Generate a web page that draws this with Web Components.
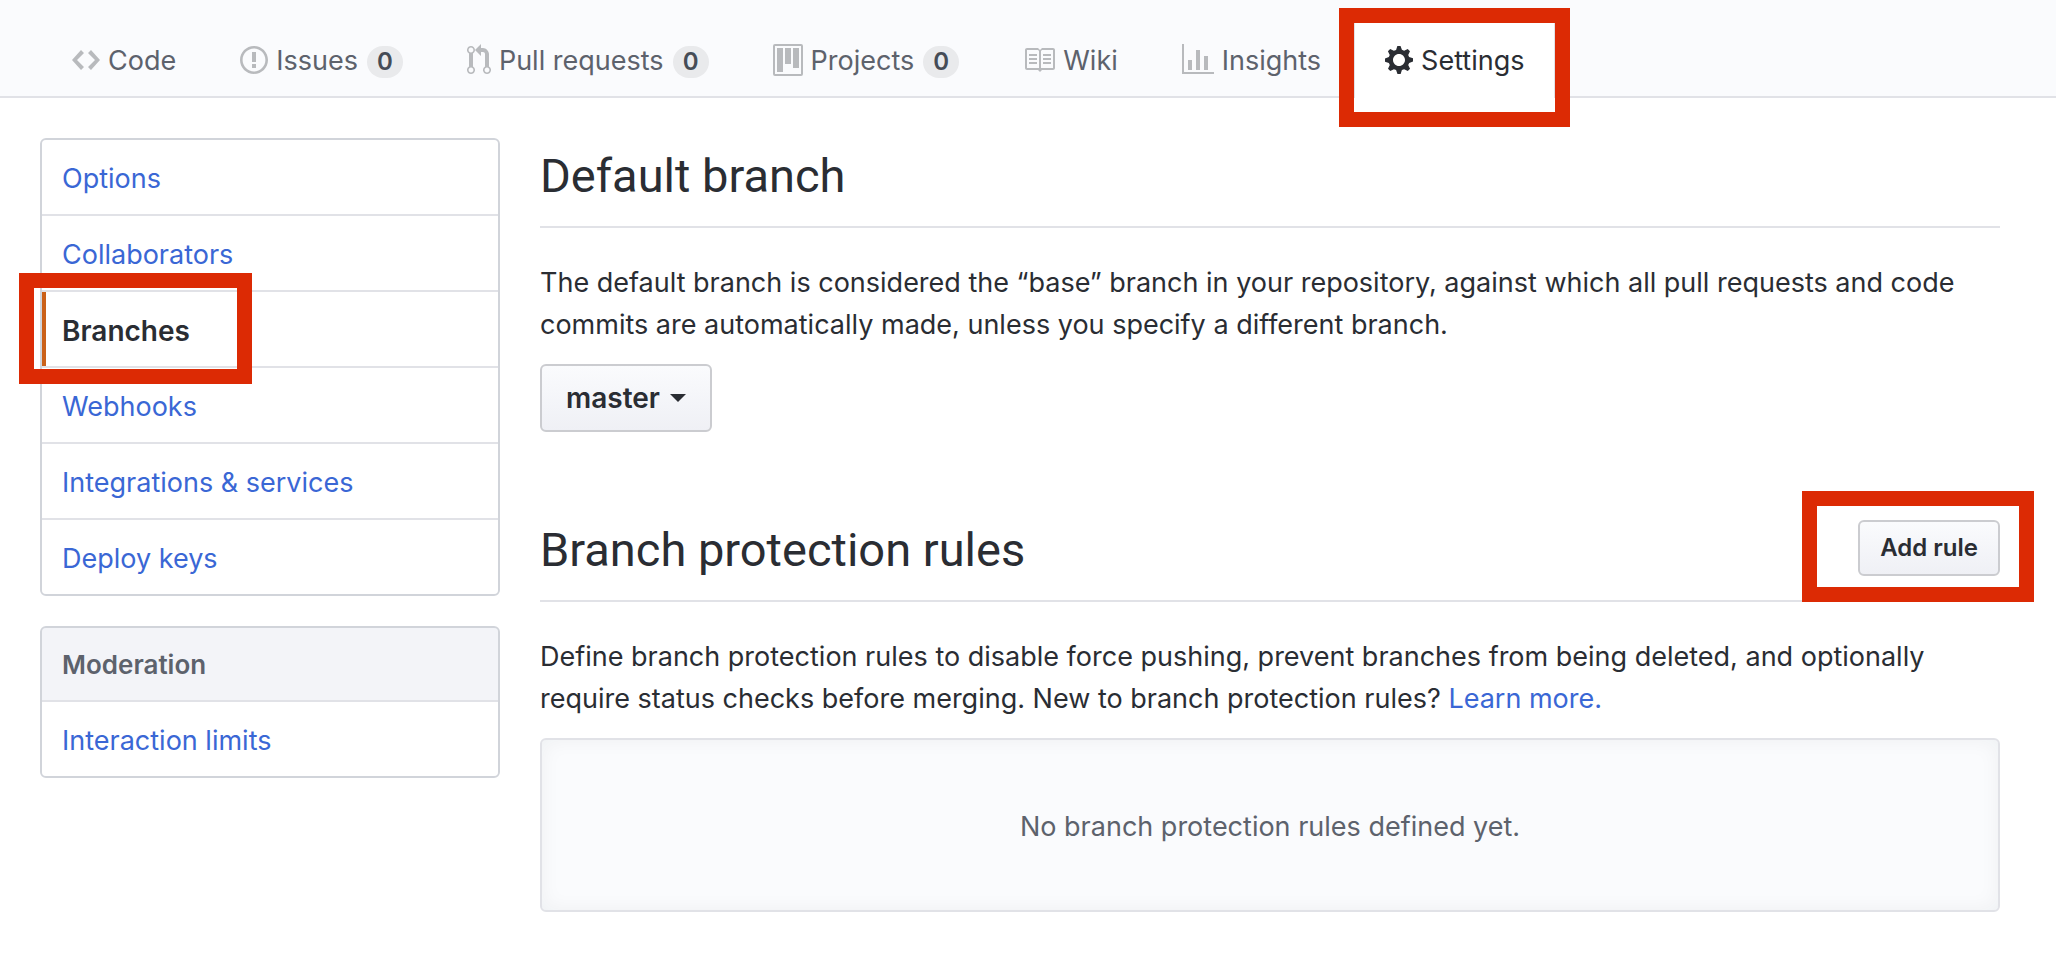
<!DOCTYPE html>
<html lang="en">
<head>
<meta charset="utf-8">
<title>Branches</title>
<style>
  body {
    margin: 0;
    background: #fff;
    color: #2a2d33;
    font: 27px/42px Inter, "Liberation Sans", sans-serif;
    --link: #3a67d5;
    --line: #e1e2e7;
    --muted: #5d626c;
  }
  a {
    color: var(--link);
    text-decoration: none;
  }
</style>
</head>
<body>
<settings-page>
  <repo-nav slot="nav">
    <repo-tab icon="code">Code</repo-tab>
    <repo-tab icon="issue" count="0">Issues</repo-tab>
    <repo-tab icon="pull" count="0">Pull requests</repo-tab>
    <repo-tab icon="project" count="0">Projects</repo-tab>
    <repo-tab icon="book">Wiki</repo-tab>
    <repo-tab icon="graph">Insights</repo-tab>
    <repo-tab icon="gear" selected>Settings</repo-tab>
  </repo-nav>

  <side-menu slot="side">
    <menu-item>Options</menu-item>
    <menu-item>Collaborators</menu-item>
    <menu-item selected>Branches</menu-item>
    <menu-item>Webhooks</menu-item>
    <menu-item>Integrations &amp; services</menu-item>
    <menu-item>Deploy keys</menu-item>
  </side-menu>
  <side-menu slot="side" heading="Moderation">
    <menu-item>Interaction limits</menu-item>
  </side-menu>

  <settings-section heading="Default branch">
    The default branch is considered the “base” branch in your repository, against which all pull requests and code commits are automatically made, unless you specify a different branch.
    <branch-select slot="body"></branch-select>
  </settings-section>
  <settings-section heading="Branch protection rules">
    <rule-button slot="action">Add rule</rule-button>
    Define branch protection rules to disable force pushing, prevent branches from being deleted, and optionally require status checks before merging. New to branch protection rules? <a href="#learn">Learn more.</a>
    <blank-slate slot="body">No branch protection rules defined yet.</blank-slate>
  </settings-section>
</settings-page>

<script>
const icons = {
  code: [14, 'M9.5 3L8 4.5 11.5 8 8 11.5 9.5 13 14 8 9.5 3zm-5 0L0 8l4.5 5L6 11.5 2.5 8 6 4.5 4.5 3z'],
  issue: [14, 'M7 2.3c3.14 0 5.7 2.56 5.7 5.7s-2.56 5.7-5.7 5.7A5.71 5.71 0 0 1 1.3 8c0-3.14 2.56-5.7 5.7-5.7zM7 1C3.14 1 0 4.14 0 8s3.14 7 7 7 7-3.14 7-7-3.14-7-7-7zm1 3H6v5h2V4zm0 6H6v2h2v-2z'],
  pull: [12, 'M11 11.28V5c-.03-.78-.34-1.47-.94-2.06C9.46 2.35 8.78 2.03 8 2H7V0L4 3l3 3V4h1c.27.02.48.11.69.31.21.2.3.42.31.69v6.28A1.993 1.993 0 0 0 10 15a1.993 1.993 0 0 0 1-3.72zm-1 2.92c-.66 0-1.2-.55-1.2-1.2 0-.65.55-1.2 1.2-1.2.65 0 1.2.55 1.2 1.2 0 .65-.55 1.2-1.2 1.2zM4 3c0-1.11-.89-2-2-2a1.993 1.993 0 0 0-1 3.72v6.56A1.993 1.993 0 0 0 2 15a1.993 1.993 0 0 0 1-3.72V4.72c.59-.34 1-.98 1-1.72zm-.8 10c0 .66-.55 1.2-1.2 1.2-.65 0-1.2-.55-1.2-1.2 0-.65.55-1.2 1.2-1.2.65 0 1.2.55 1.2 1.2zM2 4.2C1.34 4.2.8 3.65.8 3c0-.65.55-1.2 1.2-1.2.65 0 1.2.55 1.2 1.2 0 .65-.55 1.2-1.2 1.2z'],
  project: [15, 'M10 12h3V2h-3v10zm-4-2h3V2H6v8zm-4 4h3V2H2v12zm-1 1h13V1H1v14zM14 0H1a1 1 0 0 0-1 1v14a1 1 0 0 0 1 1h13a1 1 0 0 0 1-1V1a1 1 0 0 0-1-1z'],
  book: [16, 'M3 5h4v1H3V5zm0 3h4V7H3v1zm0 2h4V9H3v1zm11-5h-4v1h4V5zm0 2h-4v1h4V7zm0 2h-4v1h4V9zm2-6v9c0 .55-.45 1-1 1H9.5l-1 1-1-1H2c-.55 0-1-.45-1-1V3c0-.55.45-1 1-1h5.5l1 1 1-1H15c.55 0 1 .45 1 1zm-8 .5L7.5 3H2v9h6V3.5zm7-.5H9.5l-.5.5V12h6V3z'],
  graph: [16, 'M16 14v1H0V0h1v14h15zM5 13H3V8h2v5zm4 0H7V3h2v10zm4 0h-2V6h2v7z'],
  gear: [14, 'M14 8.77v-1.6l-1.94-.64-.45-1.09.88-1.84-1.13-1.13-1.81.91-1.09-.45-.69-1.92h-1.6l-.63 1.94-1.11.45-1.84-.88-1.13 1.13.91 1.81-.45 1.09L0 7.23v1.59l1.94.64.45 1.09-.88 1.84 1.13 1.13 1.81-.91 1.09.45.69 1.92h1.59l.63-1.94 1.11-.45 1.84.88 1.13-1.13-.92-1.81.47-1.09L14 8.75v.02zM7 11c-1.66 0-3-1.34-3-3s1.34-3 3-3 3 1.34 3 3-1.34 3-3 3z']
};

// red marker drawn over the control it points at
const marker = `
  .marker {
    position: absolute;
    z-index: 10;
    box-sizing: border-box;
    border: 15px solid #dc2a04;
    pointer-events: none;
  }`;

class SettingsPage extends HTMLElement {
  constructor() {
    super();
    this.attachShadow({ mode: 'open' });
    this.shadowRoot.innerHTML = `<style>
        :host { display: block; }
        .columns {
          display: grid;
          grid-template-columns: minmax(0, 23fr) minmax(0, 73fr);
          gap: 40px;
          padding: 40px 56px 40px 40px;
        }
        aside { display: flex; flex-direction: column; gap: 30px; }
        main { display: flex; flex-direction: column; gap: 80px; }
      </style>
      <slot name="nav"></slot>
      <div class="columns">
        <aside><slot name="side"></slot></aside>
        <main><slot></slot></main>
      </div>`;
  }
}

class RepoNav extends HTMLElement {
  constructor() {
    super();
    this.attachShadow({ mode: 'open' });
    this.shadowRoot.innerHTML = `<style>
        :host { display: block; }
        nav {
          display: flex;
          padding: 16px 40px 0;
          background: #fafbfd;
          border-bottom: 2px solid var(--line);
        }
      </style>
      <nav><slot></slot></nav>`;
  }
}

class RepoTab extends HTMLElement {
  constructor() {
    super();
    this.attachShadow({ mode: 'open' });
  }

  connectedCallback() {
    const [width, path] = icons[this.getAttribute('icon')];
    const count = this.getAttribute('count');
    this.shadowRoot.innerHTML = `<style>
        :host { display: block; position: relative; margin-bottom: -2px; }
        a {
          display: flex;
          align-items: center;
          gap: 8px;
          padding: 20px 30px 14px;
          border: solid transparent;
          border-width: 0 2px;
          color: var(--muted);
          text-decoration: none;
          white-space: nowrap;
        }
        svg { fill: #b8babd; }
        .label { padding-top: 2px; line-height: 46px; }
        .count {
          min-width: 36px;
          margin: 4px 0 0 1px;
          border-radius: 16px;
          background: #e9eaec;
          color: #454c56;
          font-size: 24px;
          font-weight: 600;
          line-height: 32px;
          text-align: center;
        }
        :host([selected]) a {
          background: #fff;
          border-color: var(--line);
          color: #2a2d33;
        }
        :host([selected]) svg { fill: #2a2d33; }
        ${marker}
        .marker { inset: -8px -14px -29px; }
      </style>
      <a href="#${this.getAttribute('icon')}">
        <svg width="${width * 2}" height="32" viewBox="0 0 ${width} 16" aria-hidden="true"><path fill-rule="evenodd" d="${path}"/></svg>
        <span class="label"><slot></slot></span>
        ${count ? `<span class="count">${count}</span>` : ''}
      </a>
      ${this.hasAttribute('selected') ? '<div class="marker"></div>' : ''}`;
  }
}

class SideMenu extends HTMLElement {
  constructor() {
    super();
    this.attachShadow({ mode: 'open' });
  }

  connectedCallback() {
    const heading = this.getAttribute('heading');
    this.shadowRoot.innerHTML = `<style>
        :host { display: block; }
        nav {
          display: flex;
          flex-direction: column;
          gap: 2px;
          border: 2px solid #d1d4da;
          border-radius: 6px;
          background: var(--line);
        }
        h3 {
          margin: 0;
          padding: 16px 20px 14px;
          border-radius: 4px 4px 0 0;
          background: #f3f4f8;
          color: var(--muted);
          font-size: 26px;
          font-weight: 600;
        }
      </style>
      <nav>${heading ? `<h3>${heading}</h3>` : ''}<slot></slot></nav>`;
  }
}

class MenuItem extends HTMLElement {
  constructor() {
    super();
    this.attachShadow({ mode: 'open' });
    this.shadowRoot.innerHTML = `<style>
        :host { display: block; position: relative; background: #fff; }
        :host(:first-child:not(:last-child)) { border-radius: 4px 4px 0 0; }
        :host(:last-child) { border-radius: 0 0 4px 4px; }
        a {
          display: block;
          padding: 18px 20px 14px;
          color: var(--link);
          text-decoration: none;
        }
        :host([selected]) a {
          padding-left: 16px;
          border-left: 4px solid #cb6119;
          color: #2a2d33;
          font-size: 28px;
          font-weight: 600;
        }
        ${marker}
        .marker { display: none; width: 233px; left: -23px; top: -19px; bottom: -18px; }
        :host([selected]) .marker { display: block; }
      </style>
      <a href="#"><slot></slot></a>
      <div class="marker"></div>`;
  }
}

class SettingsSection extends HTMLElement {
  constructor() {
    super();
    this.attachShadow({ mode: 'open' });
  }

  connectedCallback() {
    this.shadowRoot.innerHTML = `<style>
        :host { display: block; }
        header {
          display: flex;
          align-items: center;
          justify-content: space-between;
          padding-bottom: 16px;
          border-bottom: 2px solid var(--line);
        }
        h2 {
          margin: 0;
          padding-top: 4px;
          font-family: Roboto, "Liberation Sans", sans-serif;
          font-size: 47px;
          font-weight: 400;
          line-height: 68px;
        }
        p { margin: 34px 0 18px; }
      </style>
      <header>
        <h2>${this.getAttribute('heading')}</h2>
        <slot name="action"></slot>
      </header>
      <p><slot></slot></p>
      <slot name="body"></slot>`;
  }
}

class BranchSelect extends HTMLElement {
  constructor() {
    super();
    this.attachShadow({ mode: 'open' });
    this.shadowRoot.innerHTML = `<style>
        :host { display: flex; }
        div { display: grid; align-items: center; }
        select, svg { grid-area: 1 / 1; }
        select {
          appearance: none;
          margin: 0;
          padding: 11px 50px 11px 24px;
          border: 2px solid #cbccd0;
          border-radius: 6px;
          background: linear-gradient(#fafbfd, #eff0f5);
          color: #2a2d33;
          font: inherit;
          font-size: 28px;
          font-weight: 600;
        }
        svg { justify-self: end; margin-right: 26px; fill: #2a2d33; pointer-events: none; }
      </style>
      <div>
        <select aria-label="Default branch"><option>master</option></select>
        <svg width="16" height="8" viewBox="0 0 16 8"><path d="M0 0h16L8 8z"/></svg>
      </div>`;
  }
}

class RuleButton extends HTMLElement {
  constructor() {
    super();
    this.attachShadow({ mode: 'open' });
    this.shadowRoot.innerHTML = `<style>
        :host { display: block; position: relative; }
        button {
          display: block;
          padding: 6px 20px;
          border: 2px solid #cbccd0;
          border-radius: 6px;
          background: linear-gradient(#fafbfd, #eff0f5);
          color: #2a2d33;
          font: inherit;
          font-size: 24px;
          font-weight: 600;
          line-height: 40px;
        }
        ${marker}
        .marker { inset: -29px -34px -26px -56px; }
      </style>
      <button type="button"><slot></slot></button>
      <div class="marker"></div>`;
  }
}

class BlankSlate extends HTMLElement {
  constructor() {
    super();
    this.attachShadow({ mode: 'open' });
    this.shadowRoot.innerHTML = `<style>
        :host {
          display: block;
          padding: 66px 64px 62px;
          border: 2px solid var(--line);
          border-radius: 6px;
          background: #fafbfd;
          box-shadow: inset 0 0 20px rgba(27, 31, 35, .05);
          color: var(--muted);
          text-align: center;
        }
      </style>
      <slot></slot>`;
  }
}

customElements.define('settings-page', SettingsPage);
customElements.define('repo-nav', RepoNav);
customElements.define('repo-tab', RepoTab);
customElements.define('side-menu', SideMenu);
customElements.define('menu-item', MenuItem);
customElements.define('settings-section', SettingsSection);
customElements.define('branch-select', BranchSelect);
customElements.define('rule-button', RuleButton);
customElements.define('blank-slate', BlankSlate);
</script>
</body>
</html>
